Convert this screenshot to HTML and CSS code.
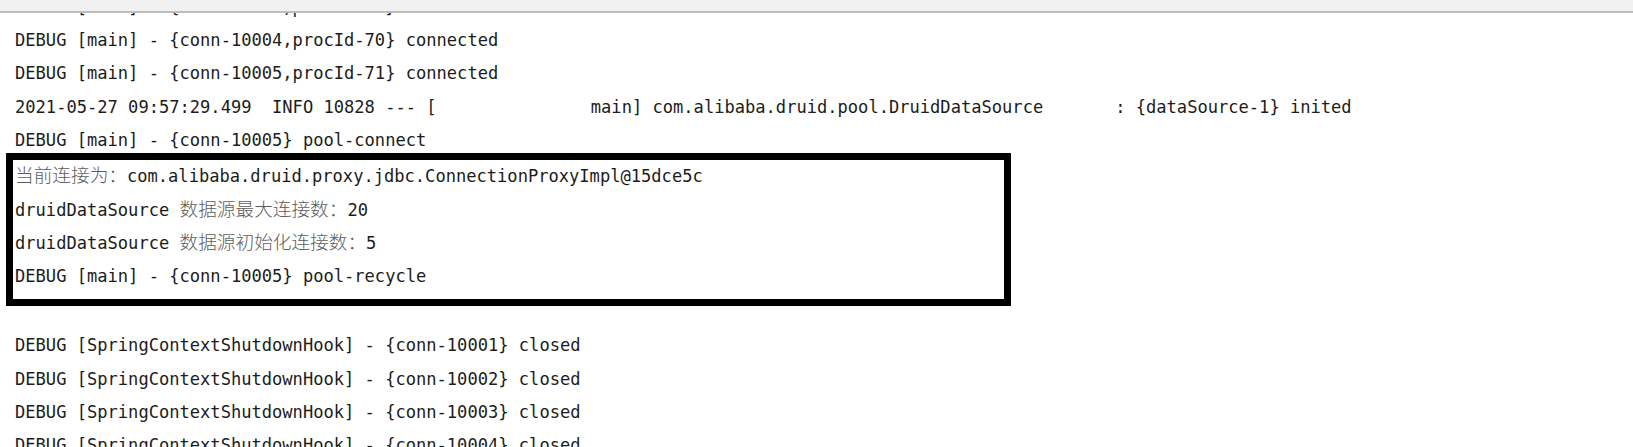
FILE: index.html
```html
<!DOCTYPE html>
<html lang="zh-CN">
<head>
<meta charset="utf-8">
<title>log</title>
<link rel="stylesheet" href="styles.css">
</head>
<body>
<div class="topbar"></div>
<div class="log">
  <div class="line line--clipped">DEBUG [main] - {conn-10003,procId-69} connected</div>
  <div class="line">DEBUG [main] - {conn-10004,procId-70} connected</div>
  <div class="line">DEBUG [main] - {conn-10005,procId-71} connected</div>
  <div class="line">2021-05-27 09:57:29.499  INFO 10828 --- [               main] com.alibaba.druid.pool.DruidDataSource       : {dataSource-1} inited</div>
  <div class="line">DEBUG [main] - {conn-10005} pool-connect</div>
  <div class="highlight">
    <div class="line"><span class="cjk">当前连接为：</span>com.alibaba.druid.proxy.jdbc.ConnectionProxyImpl@15dce5c</div>
    <div class="line">druidDataSource <span class="cjk">数据源最大连接数：</span>20</div>
    <div class="line">druidDataSource <span class="cjk">数据源初始化连接数：</span>5</div>
    <div class="line">DEBUG [main] - {conn-10005} pool-recycle</div>
  </div>
  <div class="line">DEBUG [SpringContextShutdownHook] - {conn-10001} closed</div>
  <div class="line">DEBUG [SpringContextShutdownHook] - {conn-10002} closed</div>
  <div class="line">DEBUG [SpringContextShutdownHook] - {conn-10003} closed</div>
  <div class="line">DEBUG [SpringContextShutdownHook] - {conn-10004} closed</div>
</div>
</body>
</html>
```

FILE: styles.css
```css
html, body {
  margin: 0;
  padding: 0;
  background: #ffffff;
}

body {
  width: 1633px;
  height: 447px;
  overflow: hidden;
}

.topbar {
  height: 11px;
  background: #f1f1f1;
  border-bottom: 2px solid #bdbdbd;
}

.log {
  height: 434px;
  overflow: hidden;
  font-family: "DejaVu Sans Mono", "Liberation Mono", monospace;
  font-size: 17.08px;
  color: #1c1c1c;
}

.line {
  height: 33.333px;
  line-height: 33.333px;
  padding-left: 15px;
  white-space: pre;
}

.line--clipped {
  margin-top: -22.35px;
}

.highlight {
  margin: -4px 0 23.4px 6px;
  width: 1005px;
  box-sizing: border-box;
  border: 7px solid #000000;
  padding-bottom: 5.2px;
}

.highlight .line {
  padding-left: 2px;
}

.cjk {
  font-family: "Noto Sans CJK SC", sans-serif;
  font-size: 18.67px;
  font-weight: 300;
  line-height: 20px;
  color: #5c5c5c;
}
```
